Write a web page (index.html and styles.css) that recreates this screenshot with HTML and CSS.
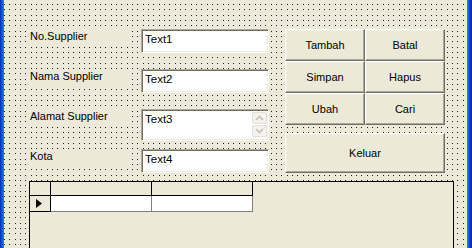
FILE: index.html
```html
<!DOCTYPE html>
<html lang="id">

<head>
    <meta charset="UTF-8">
    <title>Form Supplier</title>
    <link rel="stylesheet" href="styles.css">
</head>

<body>

    <div class="window">
        <div class="frame-left"></div>

        <div class="form">
            <div class="top">
                <div class="fields">
                    <div class="label">No.Supplier</div>
                    <div class="cell"><div class="textbox">Text1</div></div>

                    <div class="label">Nama Supplier</div>
                    <div class="cell"><div class="textbox">Text2</div></div>

                    <div class="label">Alamat Supplier</div>
                    <div class="cell">
                        <div class="textbox multi">
                            <span>Text3</span>
                            <div class="scroll">
                                <div class="arrow">
                                    <svg width="9" height="6" viewBox="0 0 9 6"><path d="M1 5 L4.5 1.5 L8 5" fill="none" stroke="#c4c2b6" stroke-width="1.6"/></svg>
                                </div>
                                <div class="arrow">
                                    <svg width="9" height="6" viewBox="0 0 9 6"><path d="M1 1 L4.5 4.5 L8 1" fill="none" stroke="#c4c2b6" stroke-width="1.6"/></svg>
                                </div>
                            </div>
                        </div>
                    </div>

                    <div class="label">Kota</div>
                    <div class="cell"><div class="textbox">Text4</div></div>
                </div>

                <div class="buttons">
                    <div class="btn-grid">
                        <button class="btn">Tambah</button>
                        <button class="btn">Batal</button>
                        <button class="btn">Simpan</button>
                        <button class="btn">Hapus</button>
                        <button class="btn">Ubah</button>
                        <button class="btn">Cari</button>
                    </div>
                    <button class="btn btn-wide">Keluar</button>
                </div>
            </div>

            <div class="datagrid">
                <div class="dg-row dg-head">
                    <div class="dg-ind"></div>
                    <div class="dg-col"></div>
                    <div class="dg-col"></div>
                </div>
                <div class="dg-row dg-data">
                    <div class="dg-ind">
                        <svg width="6" height="9" viewBox="0 0 6 9"><path d="M0 0 L6 4.5 L0 9 Z" fill="#000"/></svg>
                    </div>
                    <div class="dg-col"></div>
                    <div class="dg-col"></div>
                </div>
            </div>
        </div>

        <div class="frame-right"></div>
    </div>

</body>

</html>
```

FILE: styles.css
```css
body {
    margin: 0;
    padding: 0;
    font-family: 'Liberation Sans', Arial, sans-serif;
    font-size: 11px;
    color: #000;
    background: #ece9d8;
}

.window {
    display: flex;
    width: 472px;
    height: 248px;
    overflow: hidden;
}

.frame-left {
    width: 4px;
    background: linear-gradient(to right, #0a2fa8, #0c46d2, #1a62e6, #2a74ee);
}

.frame-right {
    width: 5px;
    background: linear-gradient(to right, #3d83f2, #1f62e2, #0b48cf, #0637b4, #022894);
}

/* design-time dot grid: 3 x 3 dots per 16px tile (about 5.33px apart) */
.form {
    --dot: conic-gradient(at 1px 1px, transparent 75%, #222 0);
    flex: 1;
    display: flex;
    flex-direction: column;
    padding: 29px 0 0 25px;
    background-color: #ece9d8;
    background-image: var(--dot), var(--dot), var(--dot), var(--dot), var(--dot),
        var(--dot), var(--dot), var(--dot), var(--dot);
    background-size: 16px 16px;
    background-position:
        0 4px, 5px 4px, 11px 4px,
        0 9px, 5px 9px, 11px 9px,
        0 15px, 5px 15px, 11px 15px;
}

.top {
    display: flex;
}

.fields {
    display: grid;
    grid-template-columns: 112px 128px;
    grid-template-rows: 40px 40px 40px 32px;
}

.label {
    width: 104px;
    height: 17px;
    margin-left: -1px;
    padding: 1px 0 0 2px;
    box-sizing: border-box;
    line-height: 13px;
    background: #ece9d8;
}

.textbox {
    box-sizing: border-box;
    height: 24px;
    background: #fff;
    border: 1px solid;
    border-color: #aca899 #fff #fff #aca899;
    box-shadow: inset 1px 1px #716f64, inset -1px -1px #f1efe2;
    padding: 3px 3px;
    line-height: 13px;
    font-size: 11.5px;
}

.textbox.multi {
    height: 32px;
    display: flex;
    justify-content: space-between;
    padding-right: 1px;
}

.scroll {
    display: flex;
    flex-direction: column;
    gap: 1px;
    margin-top: -1px;
}

.arrow {
    width: 15px;
    height: 14px;
    box-sizing: border-box;
    display: flex;
    justify-content: center;
    align-items: center;
    background: #f3f2ec;
    border: 1px solid #e2e0d6;
    border-radius: 2px;
}

.buttons {
    margin-left: 16px;
    width: 160px;
}

.btn-grid {
    display: grid;
    grid-template-columns: 80px 80px;
    grid-template-rows: repeat(3, 32px);
}

.btn {
    font-family: 'Liberation Sans', Arial, sans-serif;
    font-size: 11px;
    color: #000;
    background: #ece9d8;
    border: 1px solid;
    border-color: #fff #716f64 #716f64 #fff;
    box-shadow: inset -1px -1px #aca899, inset 1px 1px #f1efe2;
    padding: 0;
    margin: 0;
    width: 100%;
    height: 100%;
    cursor: pointer;
}

.btn-wide {
    margin-top: 8px;
    height: 40px;
}

.datagrid {
    width: 425px;
    flex: 1;
    box-sizing: border-box;
    border: 1px solid #000;
    border-bottom: none;
    background: #ece9d8;
}

.dg-row {
    display: grid;
    grid-template-columns: 21px 101px 101px;
}

.dg-row > div {
    box-sizing: border-box;
    border-right: 1px solid #000;
    border-bottom: 1px solid #000;
}

.dg-head {
    height: 14px;
}

.dg-data {
    height: 16px;
}

.dg-data .dg-col {
    background: #fff;
    border-color: #808080;
}

.dg-ind {
    display: flex;
    align-items: center;
    padding-left: 6px;
}
```
